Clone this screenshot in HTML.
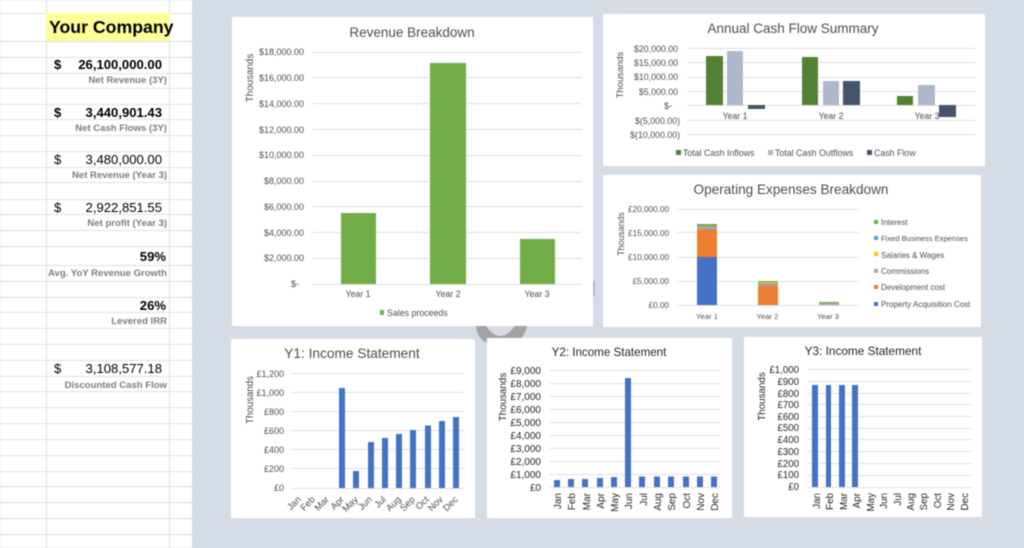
<!DOCTYPE html>
<html lang="en"><head><meta charset="utf-8"><title>Dashboard</title>
<style>
html,body{margin:0;padding:0;width:1024px;height:548px;overflow:hidden;background:#d6dce5}
svg{display:block;filter:blur(.4px)}
text{font-family:"Liberation Sans",Arial,sans-serif;fill:#4e4e4e}
.d text,text.d{fill:#262626}
.g{stroke:#dedede;stroke-width:1}
.sl{stroke:#e0e0e0;stroke-width:1}
.k{fill:#000;font-size:13.1px}
.b{font-weight:bold}
.l{fill:#7c7c7c;font-size:9.55px;font-weight:bold;text-anchor:end}
.ax{font-size:9px;text-anchor:end}
.c{font-size:8.8px;text-anchor:middle}
</style></head><body>
<svg width="1024" height="548" viewBox="0 0 1024 548" xmlns="http://www.w3.org/2000/svg">
<rect width="1024" height="548" fill="#d6dce5"/>
<!-- gray ring shard -->
<path d="M476 326 C477 336 482 345 500 345 C518 345 525 336 527 326 L515 326 Q500 346 486 326 Z" fill="#a3a3a3"/>
<path d="M593 281 h2 v15 h-2z" fill="#b4b8c0"/>
<!-- sheet -->
<rect width="192" height="548" fill="#fff"/>
<g class="sl">
<path d="M0 13.5H192M0 41.5H192M0 57.5H192M0 73.5H192M0 88.5H192M0 104.5H192M0 119.5H192M0 135.5H192M0 151.5H192M0 167.5H192M0 182.5H192M0 199.5H192M0 214.5H192M0 230.5H192M0 246.5H192M0 265.5H192M0 281.5H192M0 297.5H192M0 312.5H192M0 328.5H192M0 344.5H192M0 360.5H192M0 376.5H192M0 391.5H192M0 407.5H192M0 423.5H192M0 439.5H192M0 455.5H192M0 471.5H192M0 486.5H192M0 502.5H192M0 518.5H192M0 534.5H192" fill="none"/>
<path d="M46.5 0V548M169.5 0V548" fill="none"/>
</g>
<rect x="46" y="13" width="124" height="28" fill="#ffff99"/>
<text x="49" y="33" class="k b" style="font-size:17.7px">Your Company</text>

<text x="54" y="69" class="k b">$</text><text x="162" y="69" class="k b" text-anchor="end">26,100,000.00</text>
<text x="167" y="83" class="l">Net Revenue (3Y)</text>
<text x="54" y="117" class="k b">$</text><text x="162" y="117" class="k b" text-anchor="end">3,440,901.43</text>
<text x="167" y="131" class="l">Net Cash Flows (3Y)</text>
<text x="54" y="164" class="k">$</text><text x="162" y="164" class="k" text-anchor="end">3,480,000.00</text>
<text x="167" y="178" class="l">Net Revenue (Year 3)</text>
<text x="54" y="212" class="k">$</text><text x="162" y="212" class="k" text-anchor="end">2,922,851.55</text>
<text x="167" y="226" class="l">Net profit (Year 3)</text>
<text x="166" y="261" class="k b" text-anchor="end">59%</text>
<text x="167" y="276" class="l">Avg. YoY Revenue Growth</text>
<text x="166" y="310" class="k b" text-anchor="end">26%</text>
<text x="167" y="324" class="l">Levered IRR</text>
<text x="54" y="373" class="k">$</text><text x="162" y="373" class="k" text-anchor="end">3,108,577.18</text>
<text x="167" y="388" class="l">Discounted Cash Flow</text>

<!-- Revenue Breakdown -->
<rect x="232" y="17" width="361" height="309" fill="#fff"/>
<text x="412" y="37" text-anchor="middle" style="font-size:13.5px">Revenue Breakdown</text>
<path class="g" fill="none" d="M313 52.5H582M313 77.5H582M313 103.5H582M313 129.5H582M313 155.5H582M313 181.5H582M313 206.5H582M313 232.5H582M313 258.5H582M313 284.5H582"/>
<g>
<text class="ax" x="304" y="55">$18,000.00</text><text class="ax" x="304" y="81">$16,000.00</text><text class="ax" x="304" y="107">$14,000.00</text><text class="ax" x="304" y="133">$12,000.00</text><text class="ax" x="304" y="158">$10,000.00</text><text class="ax" x="304" y="184">$8,000.00</text><text class="ax" x="304" y="210">$6,000.00</text><text class="ax" x="304" y="236">$4,000.00</text><text class="ax" x="304" y="261">$2,000.00</text><text class="ax" x="299" y="287">$-</text>
</g>
<text transform="translate(253 78) rotate(-90)" text-anchor="middle" style="font-size:9.8px">Thousands</text>
<g fill="#70ad47"><rect x="341" y="213" width="35" height="71"/><rect x="430" y="63" width="36" height="221"/><rect x="520" y="239" width="35" height="45"/></g>
<text class="c" x="358" y="297">Year 1</text><text class="c" x="448" y="297">Year 2</text><text class="c" x="537" y="297">Year 3</text>
<rect x="380" y="310" width="4" height="5" fill="#70ad47"/>
<text x="387" y="316" style="font-size:8.8px">Sales proceeds</text>

<!-- Annual Cash Flow -->
<rect x="603" y="14" width="382" height="152" fill="#fff"/>
<text x="793" y="33" text-anchor="middle" style="font-size:13.5px">Annual Cash Flow Summary</text>
<path class="g" fill="none" d="M687 48.5H975M687 62.5H975M687 77.5H975M687 91.5H975M687 105.5H975M687 120.5H975M687 134.5H975"/>
<g style="font-size:8.8px" text-anchor="end">
<text x="678" y="52">$20,000.00</text><text x="678" y="66">$15,000.00</text><text x="678" y="80">$10,000.00</text><text x="678" y="95">$5,000.00</text><text x="672" y="109">$-</text><text x="680" y="124">$(5,000.00)</text><text x="680" y="138">$(10,000.00)</text>
</g>
<text transform="translate(623 75) rotate(-90)" text-anchor="middle" style="font-size:9.4px">Thousands</text>
<g fill="#548235"><rect x="706" y="56" width="17" height="49"/><rect x="802" y="57" width="16" height="48"/><rect x="897" y="96" width="16" height="9"/></g>
<g fill="#adb9ca"><rect x="727" y="51" width="16" height="54"/><rect x="823" y="81" width="16" height="24"/><rect x="918" y="85" width="17" height="20"/></g>
<g fill="#44546a"><rect x="748" y="105" width="17" height="4"/><rect x="843" y="81" width="17" height="24"/><rect x="939" y="105" width="17" height="12"/></g>
<text class="c" x="735" y="119">Year 1</text><text class="c" x="831" y="119">Year 2</text><text class="c" x="927" y="119">Year 3</text>
<rect x="676" y="150" width="5" height="5" fill="#548235"/><text x="683" y="156" style="font-size:8.8px">Total Cash Inflows</text>
<rect x="768" y="150" width="5" height="5" fill="#adb9ca"/><text x="775" y="156" style="font-size:8.8px">Total Cash Outflows</text>
<rect x="867" y="150" width="5" height="5" fill="#44546a"/><text x="874" y="156" style="font-size:8.8px">Cash Flow</text>

<!-- Operating Expenses -->
<rect x="603" y="175" width="378" height="152" fill="#fff"/>
<text x="791" y="194" text-anchor="middle" style="font-size:13.6px">Operating Expenses Breakdown</text>
<path class="g" fill="none" d="M677 209.5H859M677 232.5H859M677 257.5H859M677 281.5H859M677 305.5H859"/>
<g style="font-size:8.2px" text-anchor="end"><text x="669" y="212">£20,000.00</text><text x="669" y="236">£15,000.00</text><text x="669" y="260">£10,000.00</text><text x="669" y="284">£5,000.00</text><text x="669" y="308">£0.00</text></g>
<text transform="translate(624 234) rotate(-90)" text-anchor="middle" style="font-size:8.8px">Thousands</text>
<rect x="697" y="257" width="20" height="48" fill="#4472c4"/>
<rect x="697" y="229.5" width="20" height="27.5" fill="#ed7d31"/>
<rect x="697" y="226" width="20" height="3.5" fill="#a5a5a5"/>
<rect x="697" y="224" width="20" height="2" fill="#70ad47"/>
<rect x="758" y="286" width="20" height="19" fill="#ed7d31"/>
<rect x="758" y="283" width="20" height="3" fill="#a5a5a5"/>
<rect x="758" y="282" width="20" height="1" fill="#ffc000"/>
<rect x="758" y="281" width="20" height="1" fill="#70ad47"/>
<rect x="819" y="303" width="20" height="2" fill="#a5a5a5"/>
<rect x="819" y="302" width="20" height="1" fill="#70ad47"/>
<g style="font-size:7.6px" text-anchor="middle"><text x="707" y="319">Year 1</text><text x="767.5" y="319">Year 2</text><text x="828" y="319">Year 3</text></g>
<rect x="874" y="220" width="4" height="4" fill="#70ad47"/><text x="881" y="225" style="font-size:8px">Interest</text>
<rect x="874" y="236" width="4" height="4" fill="#5b9bd5"/><text x="881" y="241" style="font-size:7.6px">Fixed Business Expenses</text>
<rect x="874" y="252" width="4" height="4" fill="#ffc000"/><text x="881" y="258" style="font-size:8px">Salaries &amp; Wages</text>
<rect x="874" y="269" width="4" height="4" fill="#a5a5a5"/><text x="881" y="274" style="font-size:8px">Commissions</text>
<rect x="874" y="285" width="4" height="4" fill="#ed7d31"/><text x="881" y="290" style="font-size:8px">Development cost</text>
<rect x="874" y="302" width="4" height="4" fill="#4472c4"/><text x="881" y="307" style="font-size:8px">Property Acquisition Cost</text>

<!-- Y1 -->
<rect x="231" y="339" width="244" height="179" fill="#fff"/>
<text x="352" y="358" text-anchor="middle" style="font-size:13.7px">Y1: Income Statement</text>
<path class="g" fill="none" d="M291 373.5H464M291 392.5H464M291 411.5H464M291 430.5H464M291 449.5H464M291 468.5H464M291 488.5H464"/>
<g style="font-size:9px" text-anchor="end"><text x="284" y="377">£1,200</text><text x="284" y="396">£1,000</text><text x="284" y="415">£800</text><text x="284" y="434">£600</text><text x="284" y="453">£400</text><text x="284" y="472">£200</text><text x="284" y="491">£0</text></g>
<text transform="translate(253 400) rotate(-90)" text-anchor="middle" style="font-size:9.7px">Thousands</text>
<g fill="#4472c4"><rect x="339" y="388" width="6" height="100"/><rect x="353" y="471" width="6" height="17"/><rect x="368" y="442" width="6" height="46"/><rect x="382" y="438" width="6" height="50"/><rect x="396" y="434" width="6" height="54"/><rect x="410" y="430" width="6" height="58"/><rect x="425" y="425.5" width="6" height="62.5"/><rect x="439" y="421" width="6" height="67"/><rect x="453" y="417" width="6" height="71"/></g>
<g style="font-size:9.3px" text-anchor="end">
<text transform="translate(301.5 500) rotate(-45)">Jan</text><text transform="translate(315.5 500) rotate(-45)">Feb</text><text transform="translate(329.5 500) rotate(-45)">Mar</text><text transform="translate(344.5 500) rotate(-45)">Apr</text><text transform="translate(358.5 500) rotate(-45)">May</text><text transform="translate(372.5 500) rotate(-45)">Jun</text><text transform="translate(386.5 500) rotate(-45)">Jul</text><text transform="translate(401.5 500) rotate(-45)">Aug</text><text transform="translate(415.5 500) rotate(-45)">Sep</text><text transform="translate(429.5 500) rotate(-45)">Oct</text><text transform="translate(443.5 500) rotate(-45)">Nov</text><text transform="translate(458.5 500) rotate(-45)">Dec</text>
</g>

<!-- Y2 -->
<rect x="487" y="338" width="245" height="180" fill="#fff"/>
<g class="d">
<text x="609" y="356" text-anchor="middle" style="font-size:11.6px">Y2: Income Statement</text>
<g style="font-size:10px" text-anchor="end">
<text x="541" y="374">£9,000</text><text x="541" y="387">£8,000</text><text x="541" y="400">£7,000</text><text x="541" y="413">£6,000</text><text x="541" y="426">£5,000</text><text x="541" y="439">£4,000</text><text x="541" y="452">£3,000</text><text x="541" y="465">£2,000</text><text x="541" y="478">£1,000</text><text x="541" y="491">£0</text>
</g>
<text transform="translate(506 397) rotate(-90)" text-anchor="middle" style="font-size:9.8px">Thousands</text>
<g style="font-size:10px" text-anchor="end">
<text transform="translate(561 493) rotate(-90)">Jan</text><text transform="translate(575 493) rotate(-90)">Feb</text><text transform="translate(590 493) rotate(-90)">Mar</text><text transform="translate(604 493) rotate(-90)">Apr</text><text transform="translate(618 493) rotate(-90)">May</text><text transform="translate(632 493) rotate(-90)">Jun</text><text transform="translate(647 493) rotate(-90)">Jul</text><text transform="translate(661 493) rotate(-90)">Aug</text><text transform="translate(675 493) rotate(-90)">Sep</text><text transform="translate(690 493) rotate(-90)">Oct</text><text transform="translate(704 493) rotate(-90)">Nov</text><text transform="translate(718 493) rotate(-90)">Dec</text>
</g>
</g>
<path class="g" fill="none" d="M550 370.5H721M550 383.5H721M550 396.5H721M550 409.5H721M550 422.5H721M550 435.5H721M550 448.5H721M550 461.5H721M550 474.5H721M550 487.5H721"/>
<g fill="#4472c4"><rect x="554" y="480" width="6" height="7"/><rect x="568" y="479" width="6" height="8"/><rect x="582" y="479" width="6" height="8"/><rect x="597" y="478" width="6" height="9"/><rect x="611" y="477" width="6" height="10"/><rect x="625" y="378" width="6" height="109"/><rect x="639" y="476.5" width="6" height="10.5"/><rect x="654" y="476.5" width="6" height="10.5"/><rect x="668" y="476.5" width="6" height="10.5"/><rect x="683" y="476.5" width="6" height="10.5"/><rect x="697" y="476.5" width="6" height="10.5"/><rect x="711" y="476.5" width="6" height="10.5"/></g>

<!-- Y3 -->
<rect x="744" y="337" width="238" height="180" fill="#fff"/>
<g class="d">
<text x="863" y="355" text-anchor="middle" style="font-size:11.8px">Y3: Income Statement</text>
<g style="font-size:9.7px" text-anchor="end">
<text x="799" y="373">£1,000</text><text x="799" y="385">£900</text><text x="799" y="397">£800</text><text x="799" y="408">£700</text><text x="799" y="420">£600</text><text x="799" y="431">£500</text><text x="799" y="443">£400</text><text x="799" y="455">£300</text><text x="799" y="467">£200</text><text x="799" y="478">£100</text><text x="799" y="490">£0</text>
</g>
<text transform="translate(765 396.5) rotate(-90)" text-anchor="middle" style="font-size:9.8px">Thousands</text>
<g style="font-size:9.8px" text-anchor="end">
<text transform="translate(820 493) rotate(-90)">Jan</text><text transform="translate(833 493) rotate(-90)">Feb</text><text transform="translate(847 493) rotate(-90)">Mar</text><text transform="translate(860 493) rotate(-90)">Apr</text><text transform="translate(874 493) rotate(-90)">May</text><text transform="translate(887 493) rotate(-90)">Jun</text><text transform="translate(901 493) rotate(-90)">Jul</text><text transform="translate(914 493) rotate(-90)">Aug</text><text transform="translate(927 493) rotate(-90)">Sep</text><text transform="translate(941 493) rotate(-90)">Oct</text><text transform="translate(954 493) rotate(-90)">Nov</text><text transform="translate(968 493) rotate(-90)">Dec</text>
</g>
</g>
<path class="g" fill="none" d="M808 369.5H972M808 381.5H972M808 393.5H972M808 404.5H972M808 416.5H972M808 428.5H972M808 439.5H972M808 451.5H972M808 463.5H972M808 475.5H972M808 487.5H972"/>
<g fill="#4472c4"><rect x="812" y="385" width="6" height="102"/><rect x="826" y="385" width="5" height="102"/><rect x="839" y="385" width="6" height="102"/><rect x="852" y="385" width="6" height="102"/></g>
</svg>
</body></html>
